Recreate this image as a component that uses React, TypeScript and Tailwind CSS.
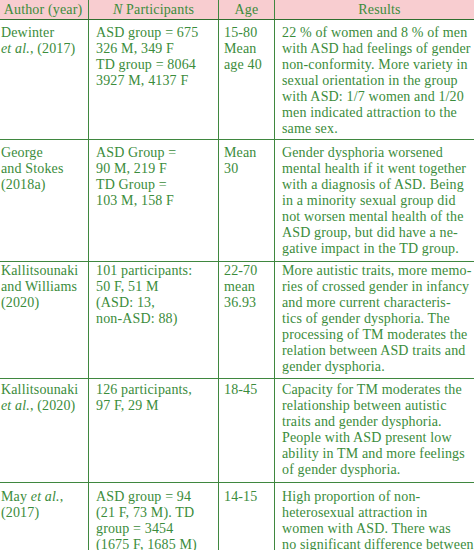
const rows = [
  {
    h: "h-[120px]",
    pt: "pt-[5px]",
    author: (
      <>
        Dewinter
        <br />
        <i>et al.</i>, (2017)
      </>
    ),
    n: ["ASD group = 675", "326 M, 349 F", "TD group = 8064", "3927 M, 4137 F"],
    age: ["15-80", "Mean", "age 40"],
    results: [
      "22 % of women and 8 % of men",
      "with ASD had feelings of gender",
      "non-conformity. More variety in",
      "sexual orientation in the group",
      "with ASD: 1/7 women and 1/20",
      "men indicated attraction to the",
      "same sex.",
    ],
  },
  {
    h: "h-[122px]",
    pt: "pt-[5px]",
    author: (
      <>
        George
        <br />
        and Stokes
        <br />
        (2018a)
      </>
    ),
    n: ["ASD Group =", "90 M, 219 F", "TD Group =", "103 M, 158 F"],
    age: ["Mean", "30"],
    results: [
      "Gender dysphoria worsened",
      "mental health if it went together",
      "with a diagnosis of ASD. Being",
      "in a minority sexual group did",
      "not worsen mental health of the",
      "ASD group, but did have a ne-",
      "gative impact in the TD group.",
    ],
  },
  {
    h: "h-[117px]",
    pt: "pt-[1px]",
    author: (
      <>
        Kallitsounaki
        <br />
        and Williams
        <br />
        (2020)
      </>
    ),
    n: ["101 participants:", "50 F, 51 M", "(ASD: 13,", "non-ASD: 88)"],
    age: ["22-70", "mean", "36.93"],
    results: [
      "More autistic traits, more memo-",
      "ries of crossed gender in infancy",
      "and more current characteris-",
      "tics of gender dysphoria. The",
      "processing of TM moderates the",
      "relation between ASD traits and",
      "gender dysphoria.",
    ],
  },
  {
    h: "h-[104px]",
    pt: "pt-[3px]",
    author: (
      <>
        Kallitsounaki
        <br />
        <i>et al.</i>, (2020)
      </>
    ),
    n: ["126 participants,", "97 F, 29 M"],
    age: ["18-45"],
    results: [
      "Capacity for TM moderates the",
      "relationship between autistic",
      "traits and gender dysphoria.",
      "People with ASD present low",
      "ability in TM and more feelings",
      "of gender dysphoria.",
    ],
  },
  {
    h: "h-[90px]",
    pt: "pt-[6px]",
    author: (
      <>
        May <i>et al.</i>,
        <br />
        (2017)
      </>
    ),
    n: ["ASD group = 94", "(21 F, 73 M). TD", "group = 3454", "(1675 F, 1685 M)"],
    age: ["14-15"],
    results: [
      "High proportion of non-",
      "heterosexual attraction in",
      "women with ASD. There was",
      "no significant difference between",
    ],
  },
];

function Lines({ items }: { items: string[] }) {
  return (
    <>
      {items.map((t, i) => (
        <div key={i} className="whitespace-nowrap">
          {t}
        </div>
      ))}
    </>
  );
}

export default function App() {
  const cols = "grid grid-cols-[97px_130px_56px_210px]";
  const cell = "border-r border-[#3f873f] overflow-visible";
  return (
    <div className="w-[474px] h-[550px] overflow-hidden bg-white">
      <div
        className="ml-[-8px] w-[493px] text-[14px] leading-[16px] tracking-[0.15px] text-[#3b8c3b]"
        style={{ fontFamily: '"Liberation Serif", "Times New Roman", serif' }}
      >
        <div className={`${cols} h-[20px] bg-[#f8cdd0] border-b border-[#2f6f2f]`}>
          <div className={`${cell} pt-[2px] text-center pl-[6px]`}>Author (year)</div>
          <div className={`${cell} pt-[2px] text-center`}>
            <i>N</i> Participants
          </div>
          <div className={`${cell} pt-[2px] text-center`}>Age</div>
          <div className={`${cell} pt-[2px] text-center`}>Results</div>
        </div>
        {rows.map((r, i) => (
          <div key={i} className={`${cols} ${r.h} border-b border-[#3f873f]`}>
            <div className={`${cell} ${r.pt} pl-[9px] whitespace-nowrap`}>{r.author}</div>
            <div className={`${cell} ${r.pt} pl-[7px]`}>
              <Lines items={r.n} />
            </div>
            <div className={`${cell} ${r.pt} pl-[5px]`}>
              <Lines items={r.age} />
            </div>
            <div className={`${cell} ${r.pt} pl-[7px]`}>
              <Lines items={r.results} />
            </div>
          </div>
        ))}
      </div>
    </div>
  );
}
